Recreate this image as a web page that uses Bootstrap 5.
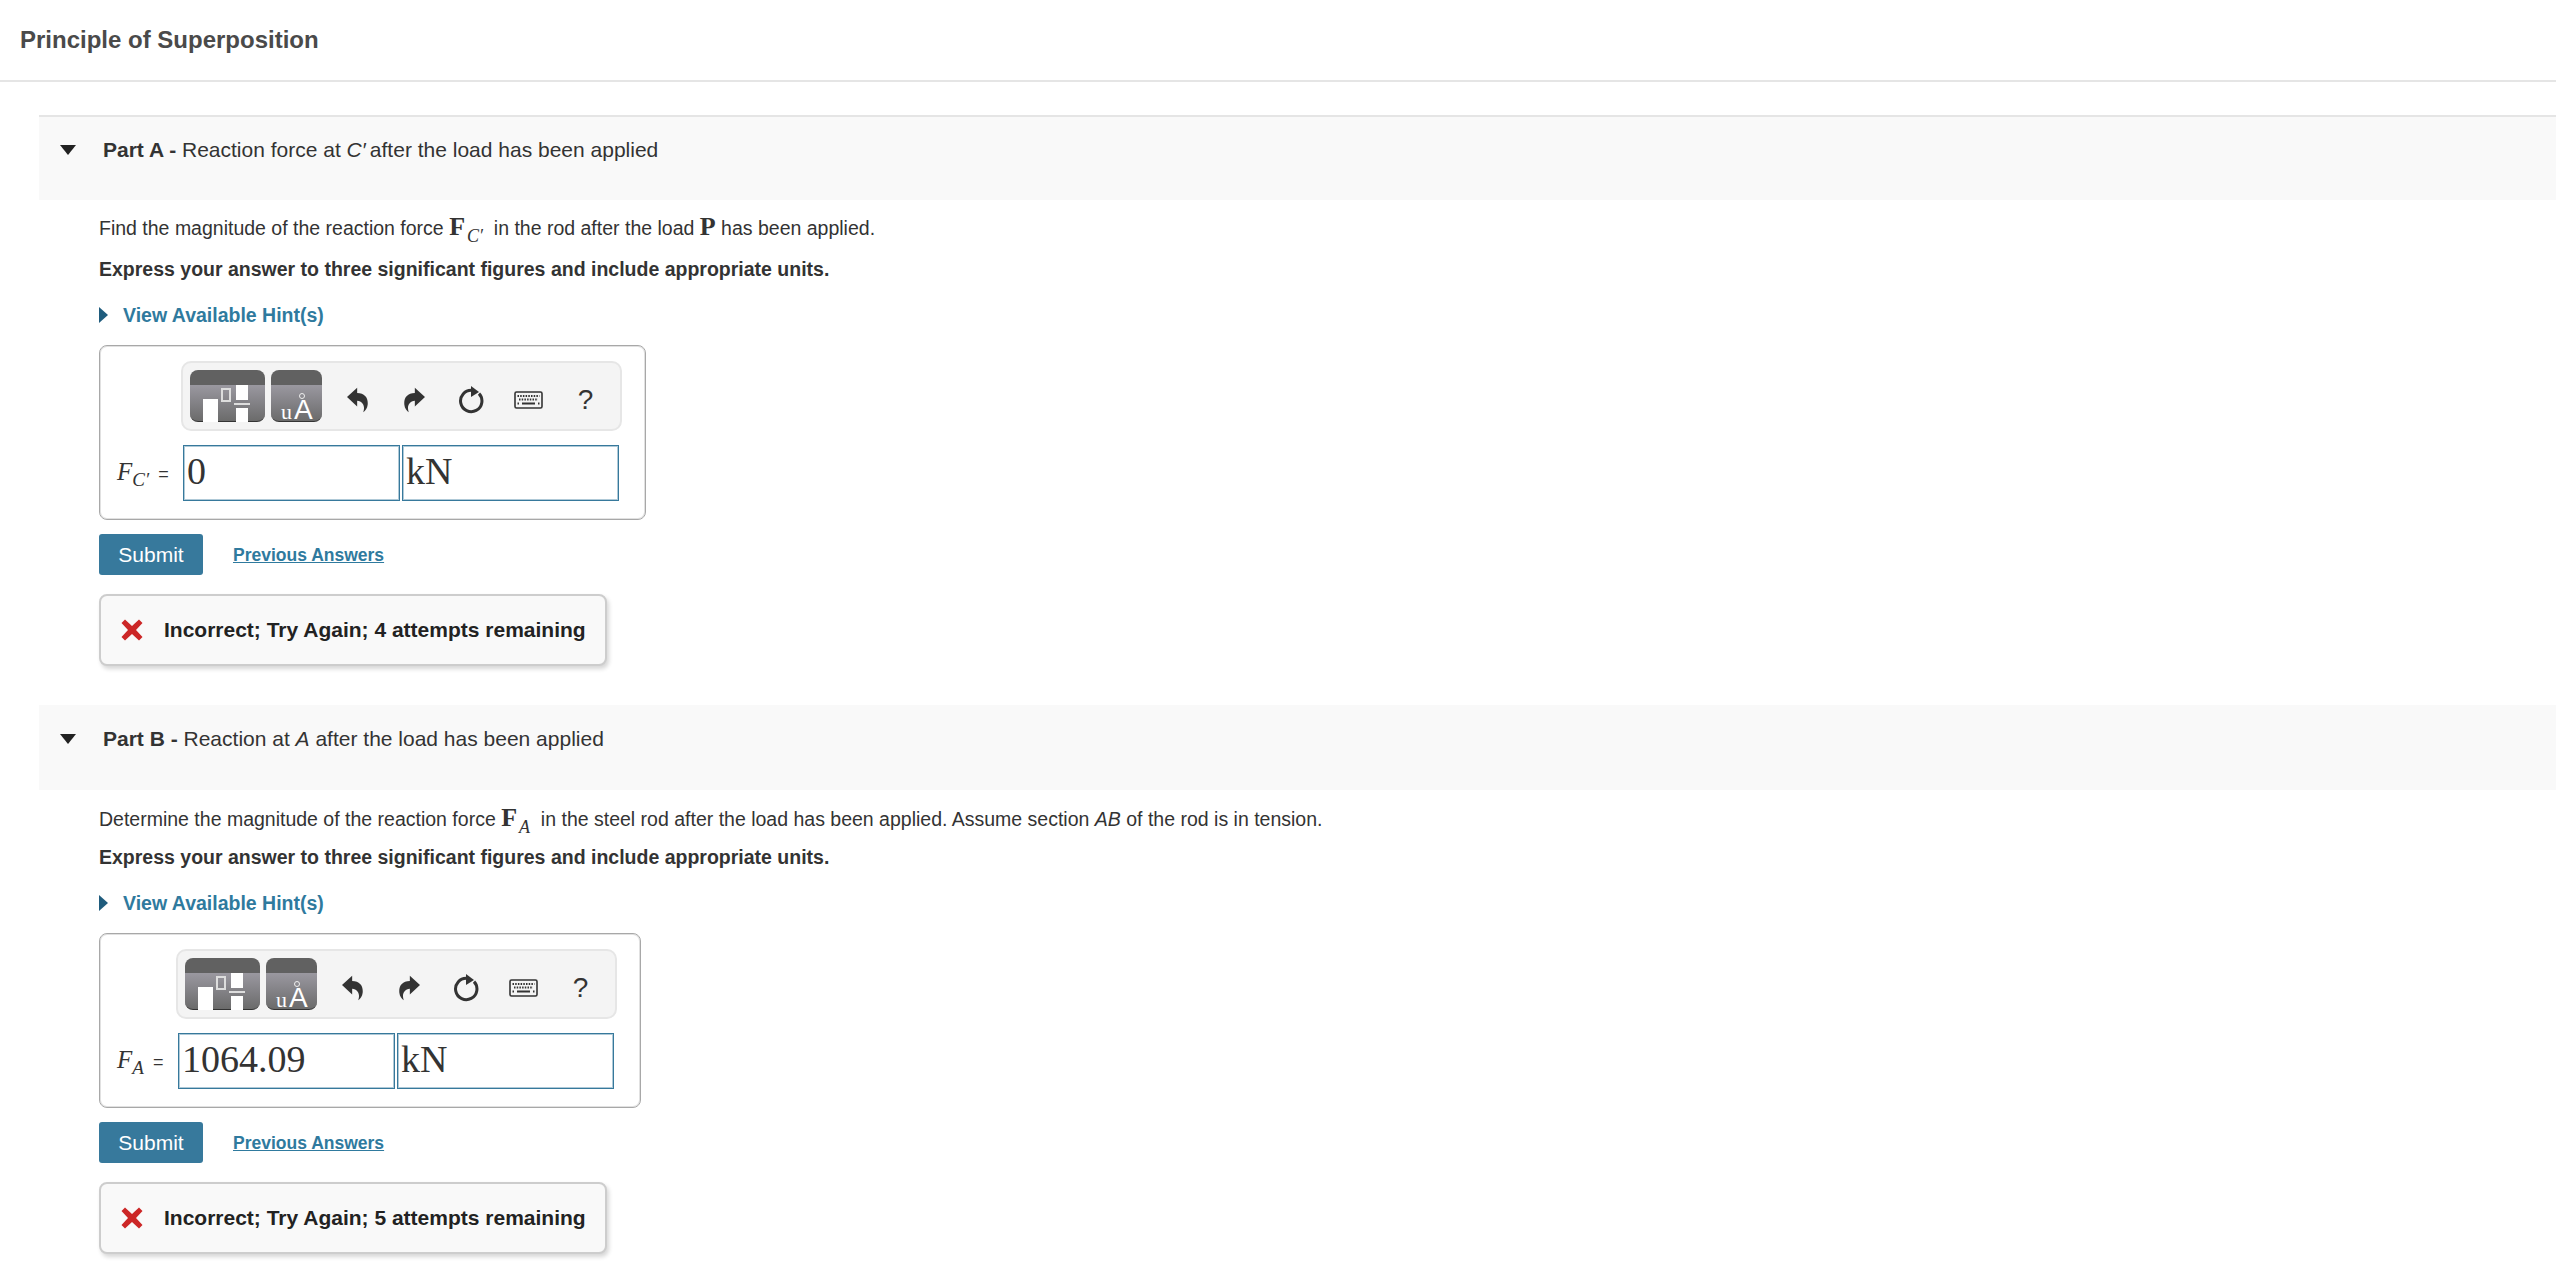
<!doctype html>
<html lang="en">
<head>
<meta charset="utf-8">
<title>Principle of Superposition</title>
<link href="https://cdn.jsdelivr.net/npm/bootstrap@5.3.0/dist/css/bootstrap.min.css" rel="stylesheet">
<style>
html,body{height:1276px;overflow:hidden}
body{font-family:"Liberation Sans",Arial,sans-serif;color:#333;background:#fff;font-size:19.5px;line-height:24px}
.page-head{height:82px;border-bottom:2px solid #e5e5e5;padding:0 20px}
.page-head h1{font-size:24px;font-weight:700;color:#4a4a4a;margin:0;line-height:30px}
.part-wrap{margin-left:39px}
.part-a{margin-top:33px}
.part-b{margin-top:39px}
.part-head{height:85px;background:#f9f9f9;padding:21px 0 0 21px;font-size:21px;line-height:26px;color:#333}
.part-a .part-head{border-top:2px solid #e5e5e5;padding-top:20px}
.caret-down{width:0;height:0;border-left:8px solid transparent;border-right:8px solid transparent;border-top:10px solid #222;margin-right:27px}
.part-body{padding-left:60px}
.math-b{font-family:"Liberation Serif",serif;font-weight:700;font-size:26px}
.math-sub{font-family:"Liberation Serif",serif;font-style:italic;font-size:18px;position:relative;top:7px;line-height:0;margin-left:2px}
.prompt{margin:15px 0 0;line-height:24px;color:#333}
.part-b .prompt{margin-top:16px}
.instr{margin:17px 0 0;font-weight:700;color:#333;line-height:24px}
.part-b .instr{margin-top:14px}
.hint-row{margin-top:22px;font-size:19.5px;font-weight:700;color:#2f7a9e;line-height:24px}
.caret-right{width:0;height:0;border-top:8px solid transparent;border-bottom:8px solid transparent;border-left:9px solid #1f5c7d;margin-right:15px}
.ans-box{border:1px solid #a8a8a8;box-shadow:inset 0 0 0 1px rgba(168,168,168,.35);border-radius:8px;margin-top:18px;height:175px;padding-top:15px}
.box-a{width:547px}
.box-b{width:542px}
.tool-bar{height:70px;width:441px;background:#f4f4f4;border:2px solid #e6e6e6;border-radius:10px;padding-left:7px}
.box-a .tool-bar{margin-left:81px}
.box-b .tool-bar{margin-left:76px}
.tpl-btn{height:52px;border-radius:8px;background:linear-gradient(#616161 0,#616161 15px,#9a98a0 15px,#6b6b6b 100%);border-bottom:1px solid #333;position:relative;flex:none}
.tpl-1{width:75px;margin-right:6px}
.tpl-2{width:51px;margin-right:7px;color:#fff;font-family:"Liberation Serif",serif}
.tpl-shape{position:absolute;background:#fff}
.tpl-box{background:none;border:2px solid #ddd}
.tpl-bar{background:#ddd}
.tpl-unit{position:absolute;left:10px;bottom:0;font-size:22px;line-height:18px}
.tpl-ang{position:absolute;left:23px;bottom:0;font-size:28px;line-height:22px;font-family:"Liberation Sans",sans-serif}
.tpl-ring{position:absolute;left:28px;top:23px;width:6px;height:6px;border:1px solid #eee;border-radius:50%}
.tool-slot{width:57px;flex:none;display:flex;justify-content:center;align-items:center;color:#333;padding-top:8px}
.tool-q{font-size:28px;line-height:30px;color:#333}
.eq-row{margin-top:14px;height:56px}
.eq-label{font-family:"Liberation Serif",serif;font-style:italic;font-size:25px;color:#333;padding-left:17px;white-space:nowrap;line-height:28px}
.box-a .eq-label{width:83px}
.box-b .eq-label{width:78px}
.eq-label sub{font-size:19px;bottom:-6px}
.eq-sign{font-family:"Liberation Sans",sans-serif;font-style:normal;font-size:18px;margin-left:9px}
.ans-input{width:217px;height:56px;border:1px solid #37799c;box-shadow:inset 0 0 0 1px rgba(55,121,156,.4);font-family:"Liberation Serif",serif;font-size:38px;color:#333;line-height:50px;padding-left:3px;margin-right:2px;flex:none}
.act-row{margin-top:14px}
.submit-btn{width:104px;height:41px;background:#37799c;border:0;border-radius:3px;color:#fff;font-size:21px;padding:0;line-height:41px;--bs-btn-hover-bg:#37799c}
.prev-link{margin-left:30px;font-size:17.500px;font-weight:700;color:#2f7a9e;text-decoration:underline}
.alert-box{width:508px;height:72px;margin-top:19px;background:#f9f9f9;border:2px solid #cdcdcd;border-radius:8px;box-shadow:2px 3px 4px rgba(0,0,0,.16);padding-left:20px;font-weight:700;font-size:21px;color:#222;white-space:nowrap}
.alert-box svg{margin-right:21px;flex:none}
</style>
</head>
<body>
<header class="page-head d-flex align-items-center"><h1>Principle of Superposition</h1></header>

<section class="part-wrap part-a">
  <div class="part-head d-flex align-items-start"><span class="caret-down mt-2"></span><div><b>Part A -</b> Reaction force at <i>C′</i>&#8201;after the load has been applied</div></div>
  <div class="part-body">
    <p class="prompt">Find the magnitude of the reaction force <span class="math-b">F</span><span class="math-sub">C′</span>&nbsp; in the rod after the load <span class="math-b">P</span> has been applied.</p>
    <p class="instr">Express your answer to three significant figures and include appropriate units.</p>
    <div class="hint-row d-flex align-items-center"><span class="caret-right"></span>View Available Hint(s)</div>
    <div class="ans-box box-a">
      <div class="tool-bar d-flex align-items-center">
        <div class="tpl-btn tpl-1"><span class="tpl-shape" style="left:13px;top:29px;width:15px;height:23px"></span><span class="tpl-shape tpl-box" style="left:31px;top:18px;width:10px;height:14px"></span><span class="tpl-shape" style="left:46px;top:15px;width:12px;height:15px"></span><span class="tpl-shape tpl-bar" style="left:44px;top:33px;width:16px;height:2px"></span><span class="tpl-shape" style="left:46px;top:38px;width:12px;height:14px"></span></div>
        <div class="tpl-btn tpl-2"><span class="tpl-unit">u</span><span class="tpl-ring"></span><span class="tpl-ang">A</span></div>
        <div class="tool-slot"><svg width="21" height="26" viewBox="52 68 62 76" aria-hidden="true"><path fill="#333" d="M52 97 82 70V85C105 85 115 100 113 120 112 130 106 138 100 142 106 125 100 110 82 108V125Z"/></svg></div>
        <div class="tool-slot"><svg width="21" height="26" viewBox="52 68 62 76" aria-hidden="true"><path fill="#333" transform="matrix(-1 0 0 1 166 0)" d="M52 97 82 70V85C105 85 115 100 113 120 112 130 106 138 100 142 106 125 100 110 82 108V125Z"/></svg></div>
        <div class="tool-slot"><svg width="26" height="29" viewBox="0 0 26 29" aria-hidden="true"><path fill="none" stroke="#333" stroke-width="3" d="M13 4.300A10.700 10.700 0 1 0 20 7.600"/><path fill="#333" d="M12 0l8 6-8 5z"/></svg></div>
        <div class="tool-slot"><svg width="29" height="18" viewBox="0 0 29 18" aria-hidden="true"><rect x="1" y="1" width="27" height="16" rx="1.500" fill="#f4f4f4" stroke="#333" stroke-width="1.600"/><path stroke="#333" stroke-width="2" stroke-dasharray="1.500 1.200" d="M3.500 5H25.500M5 8.500H24"/><path stroke="#333" stroke-width="2" d="M8 12.500H21M3.500 12.500H5M24 12.500H25.500"/></svg></div>
        <div class="tool-slot tool-q">?</div>
      </div>
      <div class="eq-row d-flex align-items-center">
        <div class="eq-label">F<sub>C′</sub><span class="eq-sign">=</span></div>
        <div class="ans-input">0</div>
        <div class="ans-input">kN</div>
      </div>
    </div>
    <div class="act-row d-flex align-items-center"><button type="button" class="btn submit-btn">Submit</button><a href="#" class="prev-link">Previous Answers</a></div>
    <div class="alert-box d-flex align-items-center"><svg width="22" height="22" viewBox="0 0 22 22" aria-hidden="true"><path fill="#cc2727" d="M4 .5 11 7 18 .5 21.500 4 15 11l6.500 7-3.500 3.500L11 15l-7 6.500L.5 18 7 11 .5 4z"/></svg>Incorrect; Try Again; 4 attempts remaining</div>
  </div>
</section>

<section class="part-wrap part-b">
  <div class="part-head d-flex align-items-start"><span class="caret-down mt-2"></span><div><b>Part B -</b> Reaction at <i>A</i> after the load has been applied</div></div>
  <div class="part-body">
    <p class="prompt">Determine the magnitude of the reaction force <span class="math-b">F</span><span class="math-sub">A</span>&nbsp; in the steel rod after the load has been applied. Assume section <i>AB</i> of the rod is in tension.</p>
    <p class="instr">Express your answer to three significant figures and include appropriate units.</p>
    <div class="hint-row d-flex align-items-center"><span class="caret-right"></span>View Available Hint(s)</div>
    <div class="ans-box box-b">
      <div class="tool-bar d-flex align-items-center">
        <div class="tpl-btn tpl-1"><span class="tpl-shape" style="left:13px;top:29px;width:15px;height:23px"></span><span class="tpl-shape tpl-box" style="left:31px;top:18px;width:10px;height:14px"></span><span class="tpl-shape" style="left:46px;top:15px;width:12px;height:15px"></span><span class="tpl-shape tpl-bar" style="left:44px;top:33px;width:16px;height:2px"></span><span class="tpl-shape" style="left:46px;top:38px;width:12px;height:14px"></span></div>
        <div class="tpl-btn tpl-2"><span class="tpl-unit">u</span><span class="tpl-ring"></span><span class="tpl-ang">A</span></div>
        <div class="tool-slot"><svg width="21" height="26" viewBox="52 68 62 76" aria-hidden="true"><path fill="#333" d="M52 97 82 70V85C105 85 115 100 113 120 112 130 106 138 100 142 106 125 100 110 82 108V125Z"/></svg></div>
        <div class="tool-slot"><svg width="21" height="26" viewBox="52 68 62 76" aria-hidden="true"><path fill="#333" transform="matrix(-1 0 0 1 166 0)" d="M52 97 82 70V85C105 85 115 100 113 120 112 130 106 138 100 142 106 125 100 110 82 108V125Z"/></svg></div>
        <div class="tool-slot"><svg width="26" height="29" viewBox="0 0 26 29" aria-hidden="true"><path fill="none" stroke="#333" stroke-width="3" d="M13 4.300A10.700 10.700 0 1 0 20 7.600"/><path fill="#333" d="M12 0l8 6-8 5z"/></svg></div>
        <div class="tool-slot"><svg width="29" height="18" viewBox="0 0 29 18" aria-hidden="true"><rect x="1" y="1" width="27" height="16" rx="1.500" fill="#f4f4f4" stroke="#333" stroke-width="1.600"/><path stroke="#333" stroke-width="2" stroke-dasharray="1.500 1.200" d="M3.500 5H25.500M5 8.500H24"/><path stroke="#333" stroke-width="2" d="M8 12.500H21M3.500 12.500H5M24 12.500H25.500"/></svg></div>
        <div class="tool-slot tool-q">?</div>
      </div>
      <div class="eq-row d-flex align-items-center">
        <div class="eq-label">F<sub>A</sub><span class="eq-sign">=</span></div>
        <div class="ans-input">1064.09</div>
        <div class="ans-input">kN</div>
      </div>
    </div>
    <div class="act-row d-flex align-items-center"><button type="button" class="btn submit-btn">Submit</button><a href="#" class="prev-link">Previous Answers</a></div>
    <div class="alert-box d-flex align-items-center"><svg width="22" height="22" viewBox="0 0 22 22" aria-hidden="true"><path fill="#cc2727" d="M4 .5 11 7 18 .5 21.500 4 15 11l6.500 7-3.500 3.500L11 15l-7 6.500L.5 18 7 11 .5 4z"/></svg>Incorrect; Try Again; 5 attempts remaining</div>
  </div>
</section>
<script src="https://cdn.jsdelivr.net/npm/bootstrap@5.3.0/dist/js/bootstrap.bundle.min.js"></script>
</body>
</html>
